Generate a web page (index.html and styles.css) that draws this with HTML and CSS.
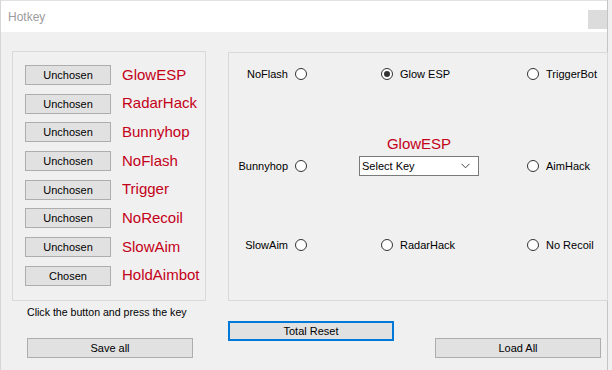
FILE: index.html
```html
<!DOCTYPE html>
<html lang="en">
  <head>
    <meta charset="UTF-8" />
    <meta name="viewport" content="width=device-width, initial-scale=1.0" />
    <title>Hotkey</title>
    <link rel="stylesheet" href="styles.css">
  </head>
  <body>
    <div class="window">
      <div class="titlebar">
        <span class="title">Hotkey</span>
        <span class="close-box"></span>
      </div>

      <div class="main">
        <div class="group left-group">
          <div class="key-row"><button class="btn key-btn">Unchosen</button><span class="hack">GlowESP</span></div>
          <div class="key-row"><button class="btn key-btn">Unchosen</button><span class="hack">RadarHack</span></div>
          <div class="key-row"><button class="btn key-btn">Unchosen</button><span class="hack">Bunnyhop</span></div>
          <div class="key-row"><button class="btn key-btn">Unchosen</button><span class="hack">NoFlash</span></div>
          <div class="key-row"><button class="btn key-btn">Unchosen</button><span class="hack">Trigger</span></div>
          <div class="key-row"><button class="btn key-btn">Unchosen</button><span class="hack">NoRecoil</span></div>
          <div class="key-row"><button class="btn key-btn">Unchosen</button><span class="hack">SlowAim</span></div>
          <div class="key-row"><button class="btn key-btn">Chosen</button><span class="hack">HoldAimbot</span></div>
        </div>

        <div class="group right-group">
          <div class="radio-row first">
            <label class="radio col1">NoFlash <span class="dot"></span></label>
            <label class="radio col2"><span class="dot checked"></span> Glow ESP</label>
            <label class="radio col3"><span class="dot"></span> TriggerBot</label>
          </div>
          <div class="radio-row middle">
            <label class="radio col1">Bunnyhop <span class="dot"></span></label>
            <div class="col2 picker">
              <div class="hack picker-title">GlowESP</div>
              <div class="select">
                <span>Select Key</span>
                <svg width="9" height="6" viewBox="0 0 9 6"><path d="M0.5 0.8 L4.5 4.8 L8.5 0.8" fill="none" stroke="#444" stroke-width="1"/></svg>
              </div>
            </div>
            <label class="radio col3"><span class="dot"></span> AimHack</label>
          </div>
          <div class="radio-row last">
            <label class="radio col1">SlowAim <span class="dot"></span></label>
            <label class="radio col2"><span class="dot"></span> RadarHack</label>
            <label class="radio col3"><span class="dot"></span> No Recoil</label>
          </div>
        </div>

        <div class="left-bottom">
          <div class="note">Click the button and press the key</div>
          <button class="btn wide-btn save-btn">Save all</button>
        </div>

        <div class="right-bottom">
          <button class="btn wide-btn reset-btn">Total Reset</button>
          <button class="btn wide-btn load-btn">Load All</button>
        </div>
      </div>
    </div>
  </body>
</html>
```

FILE: styles.css
```css
body {
  margin: 0;
  padding: 0;
  background-color: #f0f0f0;
  font-family: "Liberation Sans", Arial, sans-serif;
  font-size: 11px;
  color: #000;
}
.window {
  width: 608px;
  height: 370px;
  border-left: 1px solid #d6d6d6;
  border-right: 1px solid #c4c4c4;
  box-sizing: border-box;
  background-color: #f0f0f0;
}
.titlebar {
  height: 32px;
  background-color: #fff;
  border-top: 1px solid #e2e2e2;
  box-sizing: border-box;
  display: flex;
  align-items: center;
  justify-content: space-between;
}
.title {
  padding-left: 7px;
  font-size: 12px;
  color: #9c9c9c;
}
.close-box {
  width: 19px;
  height: 19px;
  margin-top: 5px;
  background-color: #dcdcdc;
}
.main {
  display: grid;
  grid-template-columns: 194px 380px;
  grid-template-rows: 250px auto;
  column-gap: 22px;
  padding-left: 11px;
  padding-top: 19px;
}
.group {
  border: 1px solid #d9d9d9;
  box-sizing: border-box;
}
.left-group {
  padding: 13px 0 0 12px;
  display: flex;
  flex-direction: column;
  gap: 8.7px;
}
.key-row {
  display: flex;
  align-items: center;
  height: 20px;
}
.btn {
  font-family: "Liberation Sans", Arial, sans-serif;
  font-size: 11px;
  color: #000;
  background-color: #e1e1e1;
  border: 1px solid #adadad;
  padding: 0;
  height: 20px;
  box-sizing: border-box;
}
.key-btn {
  width: 86px;
}
.hack {
  font-size: 15px;
  color: #c40018;
}
.key-row .hack {
  margin-left: 11px;
  margin-top: -2px;
}
.right-group {
  margin-top: 1px;
  height: 249px;
  display: flex;
  flex-direction: column;
}
.radio-row {
  display: grid;
  grid-template-columns: 78px 200px 1fr;
  align-items: end;
}
.radio-row.first {
  margin-top: 11px;
  height: 20px;
}
.radio-row.middle {
  margin-top: 51px;
  height: 41px;
}
.radio-row.last {
  margin-top: 59px;
  height: 20px;
}
.radio {
  display: flex;
  align-items: center;
  gap: 7px;
  height: 20px;
}
.col1 {
  justify-content: flex-end;
}
.radio.col2 {
  padding-left: 74px;
}
.radio.col3 {
  padding-left: 20px;
}
.dot {
  width: 12px;
  height: 12px;
  border: 1px solid #333;
  border-radius: 50%;
  background-color: #fff;
  box-sizing: border-box;
  display: flex;
  align-items: center;
  justify-content: center;
}
.dot.checked::after {
  content: "";
  width: 6px;
  height: 6px;
  border-radius: 50%;
  background-color: #333;
}
.picker {
  padding-left: 52px;
}
.picker-title {
  width: 120px;
  text-align: center;
  line-height: 18px;
  margin-bottom: 3px;
}
.select {
  width: 120px;
  height: 20px;
  box-sizing: border-box;
  border: 1px solid #7a7a7a;
  background-color: #fff;
  display: flex;
  align-items: center;
  justify-content: space-between;
  padding: 0 8px 0 2px;
}
.left-bottom {
  padding-left: 15px;
}
.note {
  margin-top: 4px;
  line-height: 14px;
  font-size: 10.6px;
}
.wide-btn {
  width: 166px;
}
.save-btn {
  margin-top: 19px;
}
.right-bottom {
  display: flex;
  align-items: flex-start;
}
.reset-btn {
  margin-top: 20px;
  border: 2px solid #0078d7;
}
.load-btn {
  margin-top: 37px;
  margin-left: auto;
  margin-right: 7px;
}
```
